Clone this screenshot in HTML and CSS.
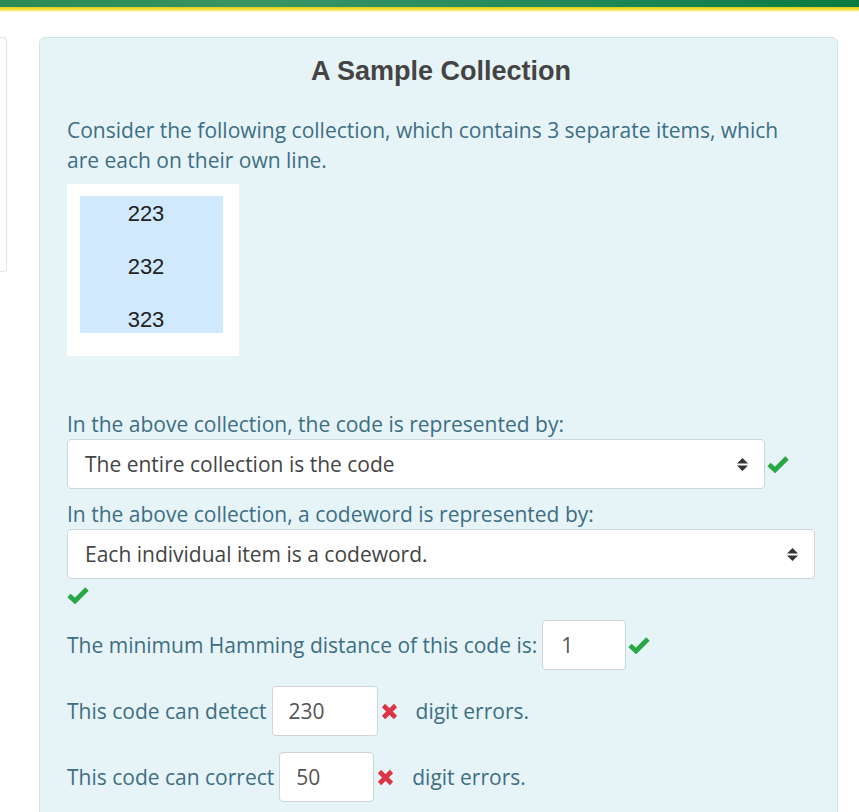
FILE: index.html
```html
<!DOCTYPE html>
<html lang="en">
<head>
    <meta charset="UTF-8">
    <meta name="viewport" content="width=device-width, initial-scale=1.0">
    <title>A Sample Collection</title>
    <link rel="stylesheet" href="styles.css">
</head>
<body>
    <div class="topbar"></div>
    <div class="stripe"></div>

    <div class="page">
        <div class="sidebar"></div>

        <div class="card">
            <h1>A Sample Collection</h1>
            <p class="intro">Consider the following collection, which contains 3 separate items, which are each on their own line.</p>

            <div class="sample">
                <div class="sample-inner">
                    <div>223</div>
                    <div>232</div>
                    <div>323</div>
                </div>
            </div>

            <!-- Question 1 -->
            <label class="label">In the above collection, the code is represented by:</label>
            <div class="row">
                <div class="select select-short">
                    <span>The entire collection is the code</span>
                    <svg class="arrows" width="11" height="15" viewBox="0 0 11 15"><path d="M0 6.5 L5.5 1 L11 6.5 Z M0 8.5 L5.5 14 L11 8.5 Z" fill="#333"/></svg>
                </div>
                <svg class="check" width="22" height="17" viewBox="0 0 22 17"><path d="M2 8.5 L8 14 L20 2" fill="none" stroke="#28a745" stroke-width="4.8"/></svg>
            </div>

            <!-- Question 2 -->
            <label class="label second">In the above collection, a codeword is represented by:</label>
            <div class="select select-long">
                <span>Each individual item is a codeword.</span>
                <svg class="arrows" width="11" height="15" viewBox="0 0 11 15"><path d="M0 6.5 L5.5 1 L11 6.5 Z M0 8.5 L5.5 14 L11 8.5 Z" fill="#333"/></svg>
            </div>
            <div class="below-check">
                <svg class="check" width="22" height="17" viewBox="0 0 22 17"><path d="M2 8.5 L8 14 L20 2" fill="none" stroke="#28a745" stroke-width="4.8"/></svg>
            </div>

            <!-- Numeric answers -->
            <div class="line">
                <span>The minimum Hamming distance of this code is:</span>
                <div class="input w-dist">1</div>
                <svg class="check" width="22" height="17" viewBox="0 0 22 17"><path d="M2 8.5 L8 14 L20 2" fill="none" stroke="#28a745" stroke-width="4.8"/></svg>
            </div>
            <div class="line">
                <span>This code can detect</span>
                <div class="input w-detect">230</div>
                <svg class="cross" width="17" height="17" viewBox="0 0 17 17"><path d="M2.5 2.5 L14.5 14.5 M14.5 2.5 L2.5 14.5" fill="none" stroke="#dc3545" stroke-width="4.6"/></svg>
                <span class="after">digit errors.</span>
            </div>
            <div class="line">
                <span>This code can correct</span>
                <div class="input w-correct">50</div>
                <svg class="cross" width="17" height="17" viewBox="0 0 17 17"><path d="M2.5 2.5 L14.5 14.5 M14.5 2.5 L2.5 14.5" fill="none" stroke="#dc3545" stroke-width="4.6"/></svg>
                <span class="after">digit errors.</span>
            </div>
        </div>
    </div>
</body>
</html>
```

FILE: styles.css
```css
body {
    margin: 0;
    font-family: 'Open Sans', sans-serif;
    background-color: #fff;
    color: #3d6e84;
    overflow: hidden;
}
.topbar {
    height: 7px;
    background: linear-gradient(to right, #2c8856, #3a9464 30%, #23895a 65%, #0b7a42);
}
.stripe {
    height: 5px;
    background: linear-gradient(to bottom, #d6cf1e, #f7dc2e 40%, #fbeb8a 75%, #fff);
}
.page {
    display: flex;
    align-items: flex-start;
    padding-top: 25px;
}
.sidebar {
    width: 6px;
    height: 233px;
    border: 1px solid #dde3e6;
    border-left: none;
    border-radius: 0 4px 4px 0;
    margin-right: 32px;
}
.card {
    width: 748px;
    min-height: 800px;
    padding: 0 22px 0 27px;
    background-color: #e7f4f7;
    border: 1px solid #cfe5eb;
    border-radius: 6px;
}
h1 {
    font-family: 'Liberation Sans', Arial, sans-serif;
    font-size: 27px;
    font-weight: bold;
    color: #444;
    text-align: center;
    margin: 17px 0 0;
    line-height: 32px;
}
.intro {
    font-size: 21px;
    line-height: 30px;
    margin: 28px 0 9px;
}

/* Sample image */
.sample {
    width: 172px;
    height: 172px;
    background-color: #fff;
    box-sizing: border-box;
    padding: 12px 0 0 13px;
}
.sample-inner {
    width: 143px;
    height: 137px;
    background-color: #d0e9fc;
    font-family: 'Liberation Sans', Arial, sans-serif;
    font-size: 22px;
    color: #222;
    text-align: center;
    box-sizing: border-box;
    padding-right: 11px;
}
.sample-inner div {
    height: 53px;
    line-height: 36px;
}

.label {
    display: block;
    font-size: 21px;
    line-height: 30px;
    margin-top: 53px;
}
.label.second {
    margin-top: 10px;
}
.row {
    display: flex;
    align-items: center;
}
.select {
    box-sizing: border-box;
    height: 50px;
    background-color: #fff;
    border: 1px solid #ced4da;
    border-radius: 4px;
    display: flex;
    align-items: center;
    justify-content: space-between;
    padding: 0 16px 0 17px;
    font-size: 21px;
    color: #444;
}
.select-short {
    width: 698px;
}
.select-long {
    width: 748px;
}
.check {
    display: block;
    margin-left: 2px;
}
.below-check {
    height: 41px;
    box-sizing: border-box;
    padding: 8px 0 0 0;
}
.below-check .check {
    margin-left: 0;
}
.line {
    display: flex;
    align-items: center;
    font-size: 21px;
    margin-bottom: 16px;
}
.input {
    box-sizing: border-box;
    height: 50px;
    background-color: #fff;
    border: 1px solid #ced4da;
    border-radius: 4px;
    color: #555;
    padding: 0 16px;
    display: flex;
    align-items: center;
    margin-left: 5px;
}
.w-dist {
    width: 84px;
    padding-left: 18px;
}
.w-detect {
    width: 106px;
}
.w-correct {
    width: 95px;
}
.cross {
    display: block;
    margin-left: 3px;
}
.after {
    margin-left: 18px;
}
```
